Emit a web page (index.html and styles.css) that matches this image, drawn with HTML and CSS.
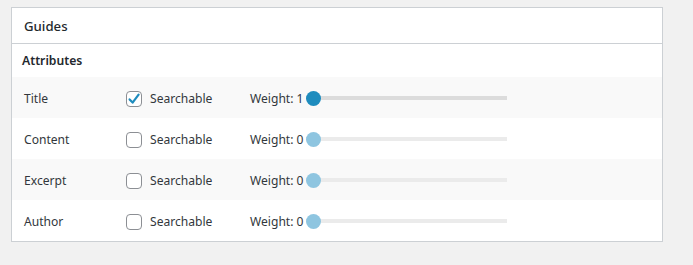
FILE: index.html
```html
<!DOCTYPE html>
<html>
<head>
<meta charset="utf-8">
<link rel="stylesheet" href="styles.css">
</head>
<body>
<div class="panel">
  <div class="panel-header">Guides</div>
  <div class="section-title">Attributes</div>
  <div class="rows">
    <div class="row alt">
      <div class="label">Title</div>
      <div class="search"><span class="cb checked"><svg viewBox="0 0 16 16" width="16" height="16"><path d="M3.6 8.4 L6.6 11.6 L12.6 3.6" fill="none" stroke="#1e8cbe" stroke-width="2.2" stroke-linecap="round" stroke-linejoin="round"/></svg></span><span>Searchable</span></div>
      <div class="weight">Weight: 1</div>
      <div class="slider active"><span class="thumb"></span></div>
    </div>
    <div class="row">
      <div class="label">Content</div>
      <div class="search"><span class="cb"></span><span>Searchable</span></div>
      <div class="weight">Weight: 0</div>
      <div class="slider"><span class="thumb"></span></div>
    </div>
    <div class="row alt">
      <div class="label">Excerpt</div>
      <div class="search"><span class="cb"></span><span>Searchable</span></div>
      <div class="weight">Weight: 0</div>
      <div class="slider"><span class="thumb"></span></div>
    </div>
    <div class="row">
      <div class="label">Author</div>
      <div class="search"><span class="cb"></span><span>Searchable</span></div>
      <div class="weight">Weight: 0</div>
      <div class="slider"><span class="thumb"></span></div>
    </div>
  </div>
</div>
</body>
</html>
```

FILE: styles.css
```css
html, body {
  margin: 0;
  padding: 0;
}
body {
  background: #f1f1f1;
  font-family: "Noto Sans", "Open Sans", "DejaVu Sans", sans-serif;
  font-size: 12.1px;
  color: #32373c;
  padding: 7px 0 0 11px;
}
.panel {
  width: 650px;
  background: #fff;
  border: 1px solid #ccd0d4;
}
.panel-header {
  height: 35px;
  line-height: 36px;
  padding-left: 12px;
  border-bottom: 1px solid #ccd0d4;
  font-size: 13.2px;
  font-weight: 500;
  color: #23282d;
}
.section-title {
  height: 33px;
  line-height: 34px;
  padding-left: 10px;
  font-weight: 600;
  font-size: 12.2px;
  color: #23282d;
}
.row {
  box-sizing: border-box;
  height: 41px;
  display: grid;
  grid-template-columns: 102px 124px 56px 201px;
  align-items: center;
  padding: 2px 0 0 12px;
}
.row.alt {
  background: #f9f9f9;
}
.search {
  display: flex;
  align-items: center;
  gap: 8px;
}
.cb {
  box-sizing: border-box;
  width: 16px;
  height: 16px;
  border: 1px solid #8c8f94;
  border-radius: 4px;
  background: #fff;
  display: block;
}
.cb svg {
  display: block;
  margin: -1px;
}
.slider {
  position: relative;
  height: 4px;
  margin-top: -1px;
  background: #ebebeb;
}
.slider.active {
  background: #dcdcdc;
}
.thumb {
  position: absolute;
  left: 0;
  top: -5px;
  width: 15px;
  height: 15px;
  border-radius: 50%;
  background: #8ec5e0;
}
.slider.active .thumb {
  background: #1e8cbe;
}
```
